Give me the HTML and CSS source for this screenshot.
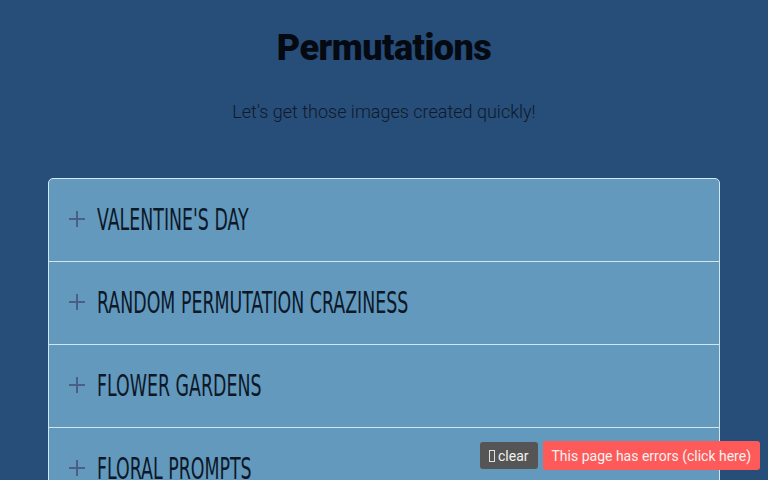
FILE: index.html
```html
<!DOCTYPE html>
<html>
<head>
<meta charset="utf-8">
<link rel="stylesheet" href="styles.css">
</head>
<body>
<header class="hero">
  <h1 class="title">Permutations</h1>
  <p class="subtitle">Let's get those images created quickly!</p>
</header>
<section class="accordion">
  <div class="row"><span class="plus"></span><span class="label">VALENTINE'S DAY</span></div>
  <div class="row"><span class="plus"></span><span class="label">RANDOM PERMUTATION CRAZINESS</span></div>
  <div class="row"><span class="plus"></span><span class="label">FLOWER GARDENS</span></div>
  <div class="row"><span class="plus"></span><span class="label">FLORAL PROMPTS</span></div>
  <div class="row"><span class="plus"></span><span class="label">LANDSCAPES</span></div>
</section>
<div class="errors">
  <button class="clear"><span class="tofu"></span> clear</button>
  <button class="err">This page has errors (click here)</button>
</div>
</body>
</html>
```
FILE: styles.css
```css
html, body {
  margin: 0;
  padding: 0;
  background: #274d79;
  height: 100%;
  overflow: hidden;
}
body {
  font-family: Roboto, "Liberation Sans", sans-serif;
  color: #0e1a2a;
}
.hero {
  text-align: center;
  padding-top: 24px;
}
.title {
  margin: 0;
  font-size: 36px;
  font-weight: 900;
  letter-spacing: -0.5px;
  line-height: 48px;
  color: #050a12;
}
.subtitle {
  margin: 28px 0 0;
  font-size: 18px;
  font-weight: 300;
  line-height: 24px;
  color: #0e1a2a;
}
.accordion {
  margin: 54px 48px 0;
  background: #6399bd;
  border: 1px solid #cfe6f5;
  border-radius: 5px;
  overflow: hidden;
}
.row {
  height: 82px;
  border-bottom: 1px solid #cfe6f5;
  display: flex;
  align-items: center;
  padding-left: 20px;
}
.plus {
  position: relative;
  width: 16px;
  height: 16px;
  flex: none;
  margin-right: 12px;
  margin-top: -2px;
}
.plus::before, .plus::after {
  content: "";
  position: absolute;
  background: #4a5e88;
}
.plus::before { left: 0; right: 0; top: 7px; height: 2px; }
.plus::after { top: 0; bottom: 0; left: 7px; width: 2px; }
.label {
  display: inline-block;
  font-family: "Liberation Sans Narrow", "DejaVu Sans Condensed", sans-serif;
  font-size: 30px;
  line-height: 34px;
  transform: scaleX(0.645);
  transform-origin: left center;
  white-space: nowrap;
  color: #0c1828;
}
.errors {
  position: fixed;
  right: 8px;
  bottom: 10px;
  display: flex;
  align-items: center;
  gap: 5px;
}
.errors button {
  border: none;
  font-family: Roboto, "Liberation Sans", sans-serif;
  font-size: 14px;
  color: #f2f2f2;
  padding: 0 9px;
  border-radius: 3px;
}
.clear {
  background: #555555;
  height: 27px;
}
.err {
  background: #ff5a5a;
  height: 29px;
  padding: 0 10px 0 11px;
}
.tofu {
  display: inline-block;
  width: 4px;
  height: 10px;
  border: 1px solid #e0e0e0;
  vertical-align: -1px;
}
```
